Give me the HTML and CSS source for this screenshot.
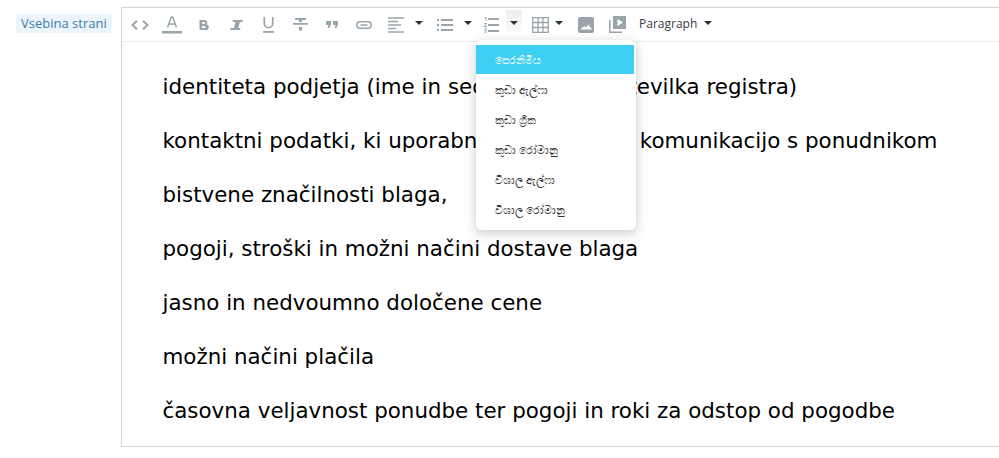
FILE: index.html
```html
<!DOCTYPE html>
<html lang="sl">
<head>
    <meta charset="UTF-8">
    <meta name="viewport" content="width=device-width, initial-scale=1.0">
    <title>Vsebina strani</title>
    <link rel="stylesheet" href="styles.css">
</head>
<body>
    <div class="field">
        <div class="field-label"><span>Vsebina strani</span></div>
        <div class="editor">
            <div class="toolbar">
                <button class="tool"><svg width="18" height="10" viewBox="0 0 18 10"><path d="M6 .7 1.500 5 6 9.300M12 .7 16.500 5 12 9.300" fill="none" stroke="#9aa5ab" stroke-width="1.900"/></svg></button>
                <button class="tool"><svg width="20" height="18" viewBox="0 0 20 18"><path d="M5.500 11.500 9.300 1h1.400l3.800 10.500M7 8h6" fill="none" stroke="#9aa5ab" stroke-width="1.500"/><rect y="15" width="20" height="2.500" fill="#9aa5ab"/></svg></button>
                <button class="tool"><svg width="10" height="12" viewBox="0 0 10 12"><path d="M.5 1h5a2.700 2.700 0 0 1 2.200 4.300A2.900 2.900 0 0 1 6 11H.5zm2.500 2v2h2.300a1 1 0 0 0 0-2zm0 4v2h2.600a1 1 0 0 0 0-2z" fill="#9aa5ab" fill-rule="evenodd"/></svg></button>
                <button class="tool"><svg width="13" height="12" viewBox="0 0 13 12"><path d="M3 1h10l-.5 2H10L8.200 9h2.300l-.5 2H0l.5-2h3.200L5.500 3H2.500z" fill="#9aa5ab"/></svg></button>
                <button class="tool"><svg width="11" height="16" viewBox="0 0 11 16"><path d="M1.300 0v6.500a4.200 4.200 0 0 0 8.400 0V0" fill="none" stroke="#9aa5ab" stroke-width="1.700"/><rect y="14" width="11" height="1.800" fill="#9aa5ab"/></svg></button>
                <button class="tool"><svg width="15" height="13" viewBox="0 0 15 13"><path d="M2 0h11v2H2zM0 5h15v1.800H0zM6 2h3v2H6zM6 9h3v3.500H6z" fill="#9aa5ab"/></svg></button>
                <button class="tool"><svg width="12" height="7" viewBox="0 0 12 7"><path d="M0 0h5v3.500L3.500 7H1.500l1-3H0zM7 0h5v3.500L10.500 7h-2l1-3H7z" fill="#9aa5ab"/></svg></button>
                <button class="tool"><svg width="16" height="8" viewBox="0 0 16 8"><rect x=".8" y=".8" width="14.400" height="6.400" rx="3.200" fill="none" stroke="#9aa5ab" stroke-width="1.500"/><path d="M4.500 4h7" stroke="#9aa5ab" stroke-width="1.500"/></svg></button>
                <button class="tool tool-align"><svg width="16" height="16" viewBox="0 0 16 16"><path d="M0 1h16M0 4.500h10M0 8h13M0 11.500h8M0 15h16" stroke="#9aa5ab" stroke-width="1.700"/></svg><span class="caret"></span></button>
                <button class="tool tool-list"><svg width="16" height="12" viewBox="0 0 16 12"><path d="M0 1h2M4 1h12M0 6h2M4 6h12M0 11h2M4 11h12" stroke="#9aa5ab" stroke-width="1.800"/></svg><span class="caret"></span></button>
                <button class="tool tool-ol"><svg width="16" height="16" viewBox="0 0 16 16"><path d="M1 0h2v4M1 6.500h2.500L1 9.500h3M1 12h3M1 14h3M1 16h3" fill="none" stroke="#9aa5ab" stroke-width="1"/><path d="M5 2h11M5 8h11M5 14h11" stroke="#9aa5ab" stroke-width="1.800"/></svg></button>
                <button class="tool tool-caret"><span class="caret"></span></button>
                <button class="tool tool-table"><svg width="17" height="16" viewBox="0 0 17 16"><path d="M.7.700h15.600v14.600H.7zM6 .7v14.600M11 .7v14.600M.7 5.500h15.600M.7 10.500h15.600" fill="none" stroke="#9aa5ab" stroke-width="1.300"/></svg><span class="caret"></span></button>
                <button class="tool tool-image"><svg width="16" height="16" viewBox="0 0 16 16"><path d="M2 0h12a2 2 0 0 1 2 2v12a2 2 0 0 1-2 2H2a2 2 0 0 1-2-2V2a2 2 0 0 1 2-2zm0 12.500h12l-3.500-5-2.500 3-1.700-1.500z" fill="#9aa5ab" fill-rule="evenodd"/></svg></button>
                <button class="tool tool-video"><svg width="17" height="17" viewBox="0 0 17 17"><path d="M4 0h13v13H4zm4.500 3v7l5.500-3.500z" fill="#9aa5ab" fill-rule="evenodd"/><path d="M.8 4v12.200H13" fill="none" stroke="#9aa5ab" stroke-width="1.600"/></svg></button>
                <button class="tool tool-format"><span class="format-name">Paragraph</span><span class="caret"></span></button>
            </div>
            <div class="content">
                <p>identiteta podjetja (ime in sedež, matična številka registra)</p>
                <p>kontaktni podatki, ki uporabniku omogočajo komunikacijo s ponudnikom</p>
                <p>bistvene značilnosti blaga,</p>
                <p>pogoji, stroški in možni načini dostave blaga</p>
                <p>jasno in nedvoumno določene cene</p>
                <p>možni načini plačila</p>
                <p>časovna veljavnost ponudbe ter pogoji in roki za odstop od pogodbe</p>
            </div>
            <ul class="dropdown">
                <li class="active">පෙරනිමිය</li>
                <li>කුඩා ඇල්ෆා</li>
                <li>කුඩා ග්‍රීක</li>
                <li>කුඩා රෝමානු</li>
                <li>විශාල ඇල්ෆා</li>
                <li>විශාල රෝමානු</li>
            </ul>
        </div>
    </div>
</body>
</html>
```

FILE: styles.css
```css
*{margin: 0;padding: 0;box-sizing: border-box}
ul,li{list-style: none;}
html,body{height: 100%;overflow: hidden;background: #fff;}
.field{display: flex;padding-top: 7px;height: 447px;}
.field-label{width: 121px;padding: 7px 0 0 16px;font-family: "Open Sans", sans-serif;font-size: 13px;}
.field-label span{display: inline-block;padding: 0 5px;height: 19px;line-height: 19px;background: #ebf5fb;color: #3b7ea6;border-radius: 3px;}
.editor{position: relative;flex: 1;border: 1px solid #ccd5db;border-right: 0;}
.toolbar{display: flex;align-items: center;height: 34px;padding-left: 2px;border-bottom: 1px solid #e9eef1;}
.tool{display: flex;align-items: center;justify-content: center;width: 32px;height: 32px;flex-shrink: 0;border: 0;background: none;}
.tool-align{width: 50px;gap: 11px;padding-left: 1px;}
.tool-list{width: 48px;gap: 11px;}
.tool-ol{width: 32px;margin-left: -3px;}
.tool-caret{width: 16px;height: 22px;margin: 0 0 7px -1px;padding-top: 3px;background: linear-gradient(#eceeef, #fafbfb);}
.tool-caret .caret{margin-bottom: 0;}
.tool-table{width: 44px;gap: 6px;margin-left: 3px;}
.tool-image{width: 32px;margin-left: 1px;}
.tool-video{width: 32px;margin-left: -1px;}
.tool-format{width: 84px;gap: 7px;font-family: "Open Sans", sans-serif;font-size: 12px;color: #384047;justify-content: flex-start;padding-left: 6px;}
.format-name{margin-bottom: 3px;}
.caret{width: 0;height: 0;margin-bottom: 4px;border-left: 4px solid transparent;border-right: 4px solid transparent;border-top: 4px solid #2c3338;}
.content{padding: 30px 0 0 40.500px;font-family: "DejaVu Sans", sans-serif;font-size: 21.400px;color: #000;}
.content p{height: 30px;line-height: 30px;margin-bottom: 24px;white-space: nowrap;}
.dropdown{position: absolute;left: 354px;top: 32px;width: 160px;height: 190px;padding: 5px 2px 0 0;background: #fff;border-radius: 6px;box-shadow: 0 3px 12px rgba(0,0,0,.22);font-family: "Noto Sans", "Open Sans", sans-serif;font-size: 11px;color: #333;}
.dropdown li{height: 30px;line-height: 30px;padding-left: 19px;}
.dropdown li.active{height: 29px;margin-bottom: 1px;background: #3dd0f2;color: #fff;}
```
